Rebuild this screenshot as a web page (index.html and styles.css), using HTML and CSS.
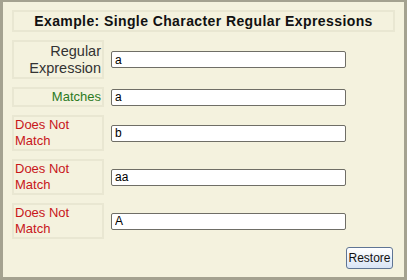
FILE: index.html
```html
<!DOCTYPE html>
<html lang="en">

<head>
    <meta charset="UTF-8">
    <title>Single Character Regular Expressions</title>
    <link rel="stylesheet" href="styles.css">
</head>

<body>
    <div class="panel">
        <div class="title">Example: Single Character Regular Expressions</div>

        <div class="row">
            <div class="label right tall">Regular Expression</div>
            <input class="field" type="text" value="a">
        </div>
        <div class="row">
            <div class="label right match">Matches</div>
            <input class="field" type="text" value="a">
        </div>
        <div class="row">
            <div class="label nomatch">Does Not Match</div>
            <input class="field" type="text" value="b">
        </div>
        <div class="row">
            <div class="label nomatch">Does Not Match</div>
            <input class="field" type="text" value="aa">
        </div>
        <div class="row">
            <div class="label nomatch">Does Not Match</div>
            <input class="field" type="text" value="A">
        </div>

        <div class="actions">
            <button class="restore">Restore</button>
        </div>
    </div>
</body>

</html>
```

FILE: styles.css
```css
body {
    margin: 0;
    font-family: "Liberation Sans", Arial, sans-serif;
    font-size: 13px;
}

.panel {
    box-sizing: border-box;
    width: 407px;
    height: 280px;
    background-color: #f4f2de;
    border: 3px solid #a4a290;
    border-top-width: 2px;
    padding: 8px 9px 0 9px;
    display: flex;
    flex-direction: column;
    gap: 8px;
}

.title {
    border: 2px solid #e9e7d2;
    text-align: center;
    font-weight: bold;
    font-size: 14px;
    letter-spacing: 0.4px;
    line-height: 18px;
    color: #111;
}

.row {
    display: flex;
    align-items: center;
    gap: 7px;
}

.label {
    box-sizing: border-box;
    width: 92px;
    border: 2px solid #e9e7d2;
    line-height: 16px;
    padding: 0 1px;
}

.right {
    text-align: right;
    color: #333;
}

.tall {
    font-size: 14.5px;
    line-height: 17px;
    padding-top: 1px;
    padding-bottom: 0;
}

.match {
    color: #2c7a1e;
}

.nomatch {
    color: #c8161a;
}

.field {
    box-sizing: border-box;
    width: 235px;
    height: 17px;
    margin: 0;
    padding: 0 3px;
    border: 1px solid #6f6e66;
    border-radius: 2px;
    background: #fff;
    font-family: "Liberation Sans", Arial, sans-serif;
    font-size: 12px;
    color: #000;
}

.actions {
    display: flex;
    justify-content: flex-end;
    padding-right: 2px;
}

.restore {
    width: 47px;
    height: 22px;
    padding: 0;
    border: 1px solid #5f7594;
    border-radius: 3px;
    background: linear-gradient(#ffffff, #d9e5f6);
    font-family: "Liberation Sans", Arial, sans-serif;
    font-size: 12px;
    color: #111;
}
```
